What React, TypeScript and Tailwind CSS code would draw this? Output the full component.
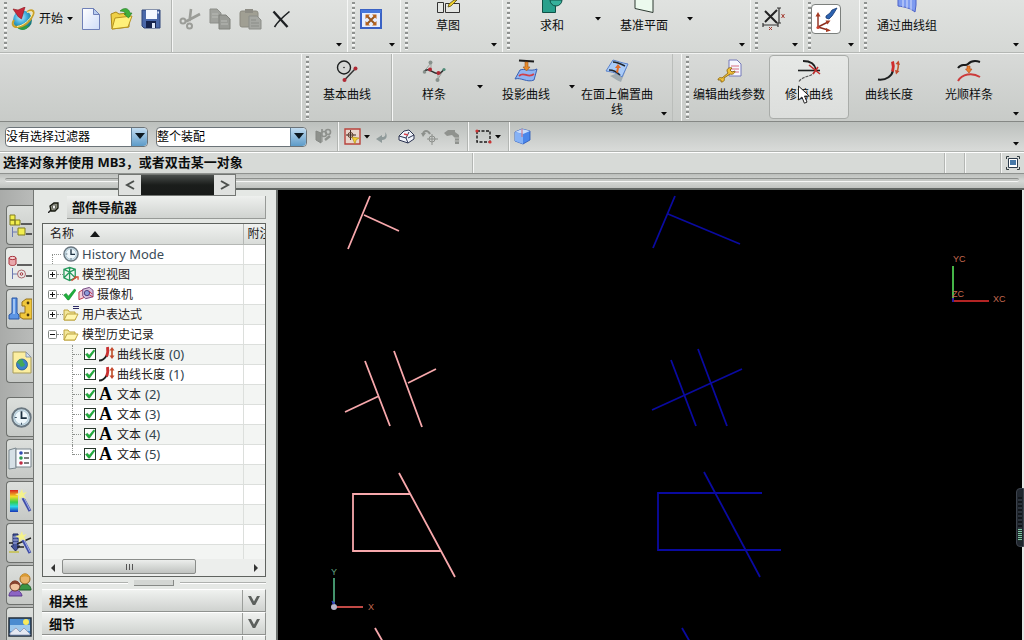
import React from "react";

type Kids = { children?: React.ReactNode };

function Caret() {
  return (
    <svg width="6" height="4" viewBox="0 0 6 4" className="shrink-0" aria-hidden="true">
      <path d="M0 0h6L3 3.6z" fill="#0a0a0a" />
    </svg>
  );
}

function Overflow() {
  return (
    <button aria-label="工具条选项" className="mr-1 mb-1 ml-auto flex h-2.5 w-2 shrink-0 items-end justify-center self-end pb-px">
      <Caret />
    </button>
  );
}

function DropButton({ label }: { label: string }) {
  return (
    <button aria-label={label} className="flex h-5 w-3 shrink-0 items-center justify-center">
      <Caret />
    </button>
  );
}

function Grip() {
  return (
    <span className="my-0.5 w-[3px] shrink-0 bg-[repeating-linear-gradient(to_bottom,#8f9290_0_2px,#f4f5f4_2px_4px,transparent_4px_5px)]" />
  );
}

function Divider() {
  return <span className="w-0.5 shrink-0 border-l border-[#b3b6b3] bg-[#f6f7f6]" />;
}

function IconButton({ label, className, children }: { label: string; className?: string } & Kids) {
  return (
    <button aria-label={label} className={"flex shrink-0 items-center justify-center " + (className ?? "")}>
      {children}
    </button>
  );
}

function TopItem({ label, children }: { label: string } & Kids) {
  return (
    <button className="flex w-20 shrink-0 flex-col items-center text-xs leading-4">
      <span className="mb-1 flex h-3.5 items-start">{children}</span>
      {label}
    </button>
  );
}

function CurveItem({ label, active, children }: { label: string; active?: boolean } & Kids) {
  return (
    <button
      className={
        "relative flex h-16 w-20 flex-col items-center rounded-sm border px-px pt-[3px] text-xs leading-[15px] " +
        (active ? "border-[#a9aca9] bg-linear-to-b from-[#e6e8e6] to-[#dcdedc]" : "border-transparent")
      }
    >
      <span className="mb-1 flex h-6 items-center">{children}</span>
      {label}
      {active && <Pointer />}
    </button>
  );
}

function Pointer() {
  return (
    <svg width="14" height="20" viewBox="0 0 14 20" className="absolute top-[29px] left-[27px]" aria-hidden="true">
      <path d="M1.5 1v14l3.4-3 2.5 6.2 2.6-1.1-2.5-6h4.8z" fill="#fff" stroke="#222" strokeWidth="1" />
    </svg>
  );
}

/* ---------- standard toolbar icons ---------- */

function StartIcon() {
  return (
    <svg width="24" height="24" viewBox="0 0 24 24" aria-hidden="true">
      <defs>
        <radialGradient id="globe" cx=".4" cy=".35" r=".7">
          <stop offset="0" stopColor="#bdf1ff" />
          <stop offset=".5" stopColor="#3aa7d8" />
          <stop offset="1" stopColor="#0d6a62" />
        </radialGradient>
      </defs>
      <circle cx="11.5" cy="13" r="9.500" fill="url(#globe)" />
      <path d="M6 20c3 4 9 4 12-1-3 1-5-3-9-1z" fill="#2f9a44" />
      <path d="M16 5c4-3 8-2 6 3-2 6-9 12-16 12-5 0-5-4-3-7" fill="none" stroke="#c9a02a" strokeWidth="2" />
      <path d="M16 5.500c4-2 6-1 5 2-2 5-8 11-15 12" fill="none" stroke="#fff3a6" strokeWidth="1" />
      <path d="M2 2l5 1 7-3-3.500 12-3-2z" fill="#c8283a" stroke="#8c1219" strokeWidth=".6" />
    </svg>
  );
}

function NewIcon() {
  return (
    <svg width="20" height="24" viewBox="0 0 20 24" aria-hidden="true">
      <defs>
        <linearGradient id="sheet" x2="1" y2="1">
          <stop offset="0" stopColor="#fff" />
          <stop offset="1" stopColor="#cfdcf8" />
        </linearGradient>
      </defs>
      <path d="M1.500 1.500h11l6 6v15h-17z" fill="url(#sheet)" stroke="#6f80b8" />
      <path d="M12.500 1.500v6h6z" fill="#b9cdf0" stroke="#6f80b8" />
    </svg>
  );
}

function OpenIcon() {
  return (
    <svg width="24" height="24" viewBox="0 0 24 24" aria-hidden="true">
      <path d="M2 7l5-2 3 2 10-1v14L3 22z" fill="#efd046" stroke="#a8861a" />
      <path d="M6 11l17-2-4 11L3 22z" fill="#fff07a" stroke="#b8941f" />
      <path d="M11 4c4-4 9-3 10 2h2l-3.500 5-4.500-4h2c-1-2-3-3-6-3z" fill="#3fae3b" stroke="#227a25" strokeWidth=".6" />
    </svg>
  );
}

function SaveIcon() {
  return (
    <svg width="20" height="20" viewBox="0 0 20 20" aria-hidden="true">
      <path d="M1 1h18v18H3l-2-2z" fill="#4a68a8" stroke="#2f4578" />
      <path d="M5 1h11v9H5z" fill="#f4f8ff" />
      <path d="M16.500 2.500h1.500v2h-1.500z" fill="#dfe8f8" />
      <path d="M5 12h10v7H5z" fill="#16244c" />
      <path d="M11 14h3v5h-3z" fill="#dfe8f8" />
    </svg>
  );
}

function CutIcon() {
  return (
    <svg width="22" height="22" viewBox="0 0 22 22" fill="none" stroke="#9b9d98" strokeWidth="2" aria-hidden="true">
      <path d="M12 1l-1.500 12M21 6L7 13.500" strokeWidth="2.600" />
      <circle cx="4" cy="13" r="2.500" />
      <circle cx="10.500" cy="18" r="2.500" />
    </svg>
  );
}

function CopyIcon() {
  return (
    <svg width="22" height="22" viewBox="0 0 22 22" aria-hidden="true">
      <path d="M1 1h7l4 4v10H1z" fill="#a0a29d" stroke="#8d8f8a" />
      <path d="M10 7h7l4 4v10H10z" fill="#999b96" stroke="#80827d" />
      <path d="M3 6h6M3 9h6M12 13h6M12 16h7" stroke="#b9bbb6" />
    </svg>
  );
}

function PasteIcon() {
  return (
    <svg width="23" height="22" viewBox="0 0 23 22" aria-hidden="true">
      <rect x="1" y="3" width="18" height="16" rx="2" fill="#a09f93" stroke="#8b8a80" />
      <path d="M6 1h8v4H6z" fill="#8d8c84" />
      <path d="M10 8h8l4 4v9H10z" fill="#a5a7a2" stroke="#8b8d88" />
      <path d="M12 12h5M12 15h8M12 18h8" stroke="#8b8d88" />
    </svg>
  );
}

function DeleteIcon() {
  return (
    <svg width="20" height="18" viewBox="0 0 20 18" aria-hidden="true">
      <path d="M1.500 1.500L15.500 17" stroke="#1d2022" strokeWidth="2.400" />
      <path d="M17.500 1.500C12 6 6 11 2.500 17" fill="none" stroke="#1d2022" strokeWidth="1.600" />
    </svg>
  );
}

function FitIcon() {
  return (
    <svg width="22" height="20" viewBox="0 0 22 20" aria-hidden="true">
      <rect x="1" y="1" width="20" height="18" fill="#e8f0ff" stroke="#3a62c4" strokeWidth="2" />
      <path d="M1 1h20v3H1z" fill="#4678dc" />
      <path d="M7 7l8 8M15 7l-8 8" stroke="#9a5a20" strokeWidth="2" />
      <path d="M5.500 5.500h4.500l-4.500 4.500zM16.500 5.500h-4.500l4.500 4.500zM5.500 16.500h4.500l-4.500-4.500zM16.500 16.500h-4.500l4.500-4.500z" fill="#b8641c" />
    </svg>
  );
}

function SketchIcon() {
  return (
    <svg width="23" height="13" viewBox="0 0 23 13" aria-hidden="true">
      <path d="M.5 2.500h6v10h-6zM8.500 3.500h14v9h-14z" fill="#e4e6e3" stroke="#333" />
      <path d="M17 0l-5 4-1 3 3-1 6-6z" fill="#f0d22c" stroke="#574a10" strokeWidth=".8" />
    </svg>
  );
}

function UniteIcon() {
  return (
    <svg width="22" height="13" viewBox="0 0 22 13" aria-hidden="true">
      <path d="M1.500-1h13v13.500h-13z" fill="#28a08c" stroke="#0f5146" />
      <path d="M9 0a6 6 0 0 0 12 0z" fill="#35b09b" stroke="#0f5146" />
    </svg>
  );
}

function PlaneIcon() {
  return (
    <svg width="20" height="13" viewBox="0 0 20 13" aria-hidden="true">
      <path d="M1-1v9.500l18 4V-1z" fill="#ecfaee" stroke="#2e3a33" />
    </svg>
  );
}

function DimensionIcon() {
  return (
    <svg width="24" height="24" viewBox="0 0 24 24" fill="none" aria-hidden="true">
      <path d="M3 4l12 12M15 3L3 15" stroke="#222" strokeWidth="2" />
      <path d="M15 1h4M15 16h4M17 1v15M1 16v4M16 16v4M1 18h15" stroke="#333" strokeWidth="1.200" />
      <path d="M19.500 7l3 4m0-4l-3 4M7 20l3 3m0-3l-3 3" stroke="#a33c32" />
    </svg>
  );
}

function WcsIcon() {
  return (
    <svg width="26" height="26" viewBox="0 0 26 26" aria-hidden="true">
      <path d="M5 21V8M5 21l10-5M5 21l10 3" stroke="#8c2c1c" strokeWidth="1.400" />
      <path d="M2.500 10.500L5 6l2.500 4.500zM12.500 14.500l5 0-3 4zM13 22l5 2.500-5 1.500z" fill="#a63a22" />
      <circle cx="5" cy="21.500" r="1.600" fill="#c43" />
      <path d="M13 10l4-3 2-3 5-2-3 5-2 3-3 3-3-1z" fill="#2c62b0" stroke="#163a74" strokeWidth=".8" />
    </svg>
  );
}

function ThroughIcon() {
  return (
    <svg width="21" height="13" viewBox="0 0 21 13" aria-hidden="true">
      <path d="M1-1v7c7 1 12 2 17 6l1-7V-1z" fill="#7e9bf0" stroke="#4c62c8" />
      <path d="M6-1v8M10-1v9M14-1v11" stroke="#d5defc" />
    </svg>
  );
}

/* ---------- curve toolbar icons ---------- */

function BasicCurveIcon() {
  return (
    <svg width="22" height="24" viewBox="0 0 22 24" aria-hidden="true">
      <circle cx="8" cy="8.500" r="6.500" fill="none" stroke="#1c1f1f" strokeWidth="1.400" />
      <circle cx="8" cy="8.500" r=".8" fill="#222" />
      <path d="M8.500 21L19.500 9.500" stroke="#333" strokeWidth="1.500" />
      <circle cx="8.500" cy="21" r="2" fill="#b02a35" />
      <circle cx="19.500" cy="9.500" r="2" fill="#b02a35" />
    </svg>
  );
}

function SplineIcon() {
  return (
    <svg width="24" height="24" viewBox="0 0 24 24" fill="none" aria-hidden="true">
      <path d="M2 12.500L9 4l0 6M16 14l0 6 6-10" stroke="#9aa19c" />
      <path d="M2 12.500c5-5 8 2 14 2 3 0 4-2 6-4" stroke="#2d3030" strokeWidth="1.500" />
      <circle cx="8.500" cy="3.500" r="2" fill="#88918c" />
      <circle cx="2.500" cy="13" r="1.800" fill="#88918c" />
      <circle cx="15.500" cy="21" r="2" fill="#88918c" />
      <circle cx="22" cy="10.500" r="1.600" fill="#4f8c78" />
      <circle cx="8" cy="10.500" r="2" fill="#b02a35" />
      <circle cx="16.500" cy="14" r="2" fill="#b02a35" />
    </svg>
  );
}

function ProjectIcon() {
  return (
    <svg width="24" height="24" viewBox="0 0 24 24" aria-hidden="true">
      <path d="M1 20l5-9c5-2 10 2 17-1l-3 11c-7 3-13-3-19-1z" fill="#8fb4f2" stroke="#3861b4" />
      <path d="M5 17c5-5 9 3 15-2" fill="none" stroke="#d0404a" strokeWidth="1.800" />
      <path d="M5 1.500l15 1" stroke="#1b1b1b" strokeWidth="2" />
      <path d="M11 3h3v5h2l-3.500 4L9 8h2z" fill="#e58a2b" stroke="#a3541a" strokeWidth=".6" />
    </svg>
  );
}

function OffsetFaceIcon() {
  return (
    <svg width="24" height="24" viewBox="0 0 24 24" aria-hidden="true">
      <path d="M5 17l10-4 7-5-6 15c-4-1-8-5-11-6z" fill="#8b9aa2" opacity=".7" />
      <path d="M1 12L8 1c4 1 9 3 15 4l-6 13c-4-4-10-5-16-6z" fill="#a9cbf8" stroke="#5b83cc" />
      <path d="M8 3c4 0 8 2 12 4M4 11c5 0 8 2 11 5" fill="none" stroke="#20262c" strokeWidth="1.600" />
      <path d="M13 5l3 4h-2l-1 5-2-1 1-4h-2z" fill="#e06e2b" />
    </svg>
  );
}

function EditParamsIcon() {
  return (
    <svg width="25" height="24" viewBox="0 0 25 24" aria-hidden="true">
      <path d="M12 1h8l4 4v12H12z" fill="#f6f7ff" stroke="#7478b8" />
      <path d="M14 7h8M14 10h8M14 13h8" stroke="#d96d82" />
      <path d="M15 9c-2-1-5 0-5 3l1 2-6 5c-2-1-4 0-4 2h3v2c3 0 4-2 3-4l6-4c3 1 5-1 5-3l-3 1-2-2z" fill="#f2c239" stroke="#8c6915" strokeWidth=".9" />
    </svg>
  );
}

function TrimIcon() {
  return (
    <svg width="24" height="24" viewBox="0 0 24 24" fill="none" aria-hidden="true">
      <path d="M6 2c8 0 12 3 13 9" stroke="#1d1f1f" strokeWidth="1.800" />
      <path d="M1 11.500h22" stroke="#1d1f1f" strokeWidth="1.600" />
      <path d="M2 22.500c4-6 12-4 16-10" stroke="#555" strokeWidth="1.200" strokeDasharray="3 1" />
      <path d="M12 6l11 9M21 8l-5 7" stroke="#c32f2f" strokeWidth="1.600" />
    </svg>
  );
}

function LengthIcon() {
  return (
    <svg width="24" height="24" viewBox="0 0 24 24" fill="none" aria-hidden="true">
      <path d="M1 20.500c9 1 14-4 15-9" stroke="#1d1f1f" strokeWidth="2" />
      <path d="M15.500 12.500c1-3 1-7 0-10" stroke="#d02c2c" strokeWidth="3" />
      <path d="M21 4c1 3 0 6-1 9" stroke="#c05c30" strokeWidth="1.600" />
      <path d="M18.500 5l3-3.500 1.500 4.500zM18 11l4.500 1-3.500 3.500z" fill="#c44a2c" />
    </svg>
  );
}

function LengthFeatureIcon() {
  return (
    <svg width="16" height="16" viewBox="0 0 16 16" fill="none" aria-hidden="true">
      <path d="M0 14.500c4 0 6-2 7.500-5" stroke="#1d1f1f" strokeWidth="1.800" />
      <path d="M7.500 10.500C9 7.500 9 4 8.500 1" stroke="#c93030" strokeWidth="2.800" />
      <path d="M13 3v8" stroke="#c2603c" strokeWidth="1.800" />
      <path d="M10.500 4.500L13 1l2.500 3.500zM10.500 9.500h5L13 13z" fill="#c2482c" />
    </svg>
  );
}

function SmoothIcon() {
  return (
    <svg width="24" height="24" viewBox="0 0 24 24" fill="none" aria-hidden="true">
      <path d="M1 9c4-6 7-1 10-4s6-4 12-2" stroke="#181a1a" strokeWidth="2" />
      <path d="M1 22C5 15 15 13 23 18" stroke="#cc3b3b" strokeWidth="2" />
      <path d="M10 7h3v3h2l-3 4-3.500-4H10z" fill="#e77f2d" stroke="#b0471d" strokeWidth=".6" />
    </svg>
  );
}

/* ---------- selection bar icons ---------- */

function LinkGrayIcon() {
  return (
    <svg width="17" height="17" viewBox="0 0 17 17" fill="none" aria-hidden="true">
      <path d="M1 3l5 2v10l-5-3zM7 4V1v13" fill="#8e918d" stroke="#858884" />
      <circle cx="9" cy="6" r="2.500" stroke="#8e918d" strokeWidth="1.600" />
      <circle cx="13" cy="4" r="2.500" stroke="#8e918d" strokeWidth="1.600" />
      <path d="M10 12l5-4" stroke="#8e918d" strokeWidth="2.500" />
    </svg>
  );
}

function SnapIcon() {
  return (
    <svg width="17" height="17" viewBox="0 0 17 17" fill="none" aria-hidden="true">
      <path d="M1 1h15v15H1z" fill="#e8d6cc" stroke="#b8433c" strokeWidth="1.400" />
      <path d="M6.500 2v10M2 7h10" stroke="#3d2c24" />
      <circle cx="6.500" cy="7" r="2.500" stroke="#5d3a2a" />
      <path d="M8 9l7 1-3 2-1 4z" fill="#f0d032" stroke="#a98418" strokeWidth=".6" />
    </svg>
  );
}

function BackGrayIcon() {
  return (
    <svg width="13" height="12" viewBox="0 0 13 12" aria-hidden="true">
      <path d="M10 1c3 3 2 8-3 8v3L1 8l6-4v2c3 0 4-2 3-5z" fill="#8f9a9a" />
    </svg>
  );
}

function BodyIcon() {
  return (
    <svg width="17" height="15" viewBox="0 0 17 15" aria-hidden="true">
      <path d="M1 7l5-5 5-1 5 5v4l-6 4-9-3z" fill="#f0f3fa" stroke="#2b3350" />
      <path d="M1 7l7 2 3-6M8 9l2 5M11 1l5 5-6 3" fill="none" stroke="#2b3350" />
      <path d="M6 5l4 1" stroke="#d8414a" strokeWidth="1.600" />
    </svg>
  );
}

function SpinGrayIcon() {
  return (
    <svg width="17" height="16" viewBox="0 0 17 16" fill="none" stroke="#8d908c" aria-hidden="true">
      <path d="M2 5c1-4 5-4 7 0" strokeWidth="2" />
      <path d="M0 4l5 0-3 4z" fill="#8d908c" stroke="none" />
      <circle cx="11" cy="10" r="3" />
      <path d="M11 5v11M6 10h11" />
    </svg>
  );
}

function HammerGrayIcon() {
  return (
    <svg width="17" height="16" viewBox="0 0 17 16" aria-hidden="true">
      <path d="M0 4l4-3 7 0v2l4 3v9h-4v-6l-3-3-5 1z" fill="#8f928e" />
      <path d="M10 9h6M10 12h6" stroke="#c0c2bf" />
    </svg>
  );
}

function LassoIcon() {
  return (
    <svg width="17" height="16" viewBox="0 0 17 16" fill="none" aria-hidden="true">
      <path d="M2 2h13v11H2z" stroke="#1a1a1a" strokeWidth="1.400" strokeDasharray="3 1.500" />
      <circle cx="2" cy="2" r="1.600" fill="#c33" />
      <circle cx="15" cy="13" r="1.600" fill="#c33" />
    </svg>
  );
}

function CubeIcon() {
  return (
    <svg width="17" height="17" viewBox="0 0 17 17" aria-hidden="true">
      <path d="M1 4l7-3 8 2v9l-7 4-8-3z" fill="#4a86ea" stroke="#2755b8" strokeWidth=".8" />
      <path d="M1 4l7-3 8 2-7 3z" fill="#c9ddfb" />
      <path d="M1 4l8 2v10l-8-3z" fill="#86b2f6" />
      <path d="M8 1v8" stroke="#d06a78" />
    </svg>
  );
}

function FullscreenIcon() {
  return (
    <svg width="14" height="14" viewBox="0 0 14 14" fill="none" aria-hidden="true">
      <path d="M.500 3V.500H3M11 .500h2.500V3M13.500 11v2.500H11M3 13.500H.500V11" stroke="#333c40" />
      <path d="M2.500 2.500h9v9h-9z" fill="#fff" stroke="#2c3c4c" />
      <path d="M4 4h6v5H4z" fill="#4678a8" />
    </svg>
  );
}

/* ---------- tree icons ---------- */

function ClockIcon({ size = 16 }: { size?: number }) {
  return (
    <svg width={size} height={size} viewBox="0 0 20 20" aria-hidden="true">
      <circle cx="10" cy="10" r="8.800" fill="#cfe4ee" stroke="#6a7780" strokeWidth="1.800" />
      <circle cx="10" cy="10" r="6.600" fill="#eef7fb" stroke="#9fb8c6" strokeWidth=".8" />
      <path d="M10 4v6.500h5" fill="none" stroke="#1c3040" strokeWidth="1.700" />
      <path d="M10 15v2M3.500 10h2" stroke="#44586a" />
    </svg>
  );
}

function ModelViewIcon() {
  return (
    <svg width="16" height="16" viewBox="0 0 17 16" fill="none" aria-hidden="true">
      <path d="M1 3l6-2 6 2v9l-6 3-6-3zM1 3l6 3 6-3M7 6v9M7 1v5l-6 6M7 6l6 6" stroke="#259a5c" strokeWidth="1.400" />
      <path d="M9 15l6-4M12 11h4v3" stroke="#d24a30" strokeWidth="1.400" />
    </svg>
  );
}

function CheckIcon({ size = 12 }: { size?: number }) {
  return (
    <svg width={size} height={size} viewBox="0 0 12 12" aria-hidden="true">
      <path d="M.500 6.500L3 5l2 2.500L10.500 1 12 2 5.500 11H4.300z" fill="#1fb03c" stroke="#14802a" strokeWidth=".5" />
    </svg>
  );
}

function CameraIcon() {
  return (
    <svg width="16" height="16" viewBox="0 0 17 16" fill="none" aria-hidden="true">
      <path d="M1 6l5-3v9l-5 2z" fill="#f3d0d8" stroke="#c03048" />
      <path d="M5 3l7-2 4 3v7l-8 2-3-3z" fill="#d7c0dc" stroke="#71447e" />
      <circle cx="9.500" cy="7" r="2.800" fill="#8c9cd8" stroke="#483a78" />
      <path d="M12 5l3 3M12 9l4 2" stroke="#c03048" />
    </svg>
  );
}

function FolderIcon({ marked }: { marked?: boolean }) {
  return (
    <svg width="16" height="16" viewBox="0 0 16 16" aria-hidden="true">
      <path d="M1 14V4h4l1.500 2H12v8z" fill="#f3e79a" stroke="#bda33e" />
      <path d="M1 14l3-6h11l-3 6z" fill="#fff6ae" stroke="#bda33e" />
      {marked && <path d="M10 .500h6M10 2.500h6" stroke="#2d2a66" />}
    </svg>
  );
}

function Toggle({ open, name }: { open?: boolean; name: string }) {
  return (
    <button aria-label={name} aria-expanded={!!open} className="size-[9px] shrink-0 bg-white">
      <svg width="9" height="9" viewBox="0 0 9 9" aria-hidden="true">
        <rect x=".500" y=".500" width="8" height="8" rx="1" fill="#fff" stroke="#858a86" />
        <path d={open ? "M2 4.500h5" : "M2 4.500h5M4.500 2v5"} stroke="#111" />
      </svg>
    </button>
  );
}

function Dots() {
  return <span className="w-1.5 shrink-0 border-t border-dotted border-[#8d918d]" />;
}

type Row = {
  name: string;
  suffix?: string;
  kind: "clock" | "view" | "camera" | "expr" | "folder" | "length" | "text";
};

const rows: Row[] = [
  { name: "History Mode", kind: "clock" },
  { name: "模型视图", kind: "view" },
  { name: "摄像机", kind: "camera" },
  { name: "用户表达式", kind: "expr" },
  { name: "模型历史记录", kind: "folder" },
  { name: "曲线长度", suffix: "(0)", kind: "length" },
  { name: "曲线长度", suffix: "(1)", kind: "length" },
  { name: "文本", suffix: "(2)", kind: "text" },
  { name: "文本", suffix: "(3)", kind: "text" },
  { name: "文本", suffix: "(4)", kind: "text" },
  { name: "文本", suffix: "(5)", kind: "text" },
];

const blankRows = [0, 1, 2, 3, 4];

function Feature({ row, last }: { row: Row; last: boolean }) {
  return (
    <label className="flex h-[19px] items-center pl-[29px]">
      <span className={"self-start border-l border-dotted border-[#8d918d] " + (last ? "h-2.5" : "h-5")} />
      <span className="mr-[3px] w-2 border-t border-dotted border-[#8d918d]" />
      <span className="grid size-3 shrink-0 place-items-center">
        <input
          type="checkbox"
          defaultChecked
          className="peer col-start-1 row-start-1 size-3 appearance-none border border-[#26382b] bg-white"
        />
        <span className="pointer-events-none invisible col-start-1 row-start-1 peer-checked:visible">
          <CheckIcon size={10} />
        </span>
      </span>
      {row.kind === "length" ? (
        <span className="ml-[3px] flex w-[18px]">
          <LengthFeatureIcon />
        </span>
      ) : (
        <span className="ml-[3px] w-[18px] font-['Liberation_Serif',serif] text-lg leading-4 font-bold text-black">A</span>
      )}
      <span>{row.name}</span>
      <span className="ml-1 text-[13px] text-[#31444f]">{row.suffix}</span>
    </label>
  );
}

function Branch({ row }: { row: Row }) {
  return (
    <div className="flex h-[19px] items-center pl-[5px]">
      {row.kind === "clock" ? (
        <span className="mr-0.5 ml-1 h-2.5 w-[9px] self-end border-t border-l border-dotted border-[#8d918d]" />
      ) : (
        <>
          <Toggle name={row.name} open={row.kind === "folder"} />
          <Dots />
        </>
      )}
      <span className="mr-[3px] flex shrink-0 items-center">
        {row.kind === "clock" && <ClockIcon />}
        {row.kind === "view" && <ModelViewIcon />}
        {row.kind === "camera" && (
          <>
            <span className="mr-0.5">
              <CheckIcon size={13} />
            </span>
            <CameraIcon />
          </>
        )}
        {row.kind === "expr" && <FolderIcon marked />}
        {row.kind === "folder" && <FolderIcon />}
      </span>
      <span className={row.kind === "clock" ? "text-[13px] text-[#3b4c58]" : ""}>{row.name}</span>
    </div>
  );
}

/* ---------- resource bar ---------- */

function AssemblyIcon() {
  return (
    <svg width="24" height="24" viewBox="0 0 24 24" aria-hidden="true">
      <path d="M2 2h5v5H2zM2 7h5v5H2zM7 7h5v5H7zM10 15h7v7h-7z" fill="#f2ee4e" stroke="#807c20" />
      <path d="M13 11h11M18 21h6" stroke="#333" strokeWidth="1.400" />
      <path d="M4.500 14v10M5 19h4" stroke="#6c7ab0" />
    </svg>
  );
}

function PartIcon() {
  return (
    <svg width="24" height="24" viewBox="0 0 24 24" fill="none" aria-hidden="true">
      <path d="M1 3v6c1 2 6 2 7 0V3z" fill="#e8a8ac" stroke="#a8323c" />
      <ellipse cx="4.500" cy="3" rx="3.500" ry="1.600" fill="#f6d4d6" stroke="#a8323c" />
      <path d="M9 10h15M18 21h6" stroke="#333" strokeWidth="1.400" />
      <path d="M4.500 13v11M5 19h4" stroke="#6c7ab0" />
      <circle cx="13.500" cy="19" r="4" stroke="#a8666c" />
      <circle cx="13.500" cy="19" r="1.300" stroke="#a8323c" />
    </svg>
  );
}

function ReuseIcon() {
  return (
    <svg width="24" height="24" viewBox="0 0 24 24" aria-hidden="true">
      <path d="M4 1h5v15l2 2v4H1v-4l3-2z" fill="#5b94e4" stroke="#2b56a4" />
      <path d="M6 2v15" stroke="#b8d4fa" strokeWidth="1.500" />
      <path d="M14 5l4-3h6v20h-9l-3-2v-4h5V9h-3z" fill="#f0c83c" stroke="#94701a" />
      <circle cx="20" cy="6" r="1.400" fill="#4c3a10" />
      <circle cx="20" cy="18" r="1.400" fill="#4c3a10" />
    </svg>
  );
}

function WebIcon() {
  return (
    <svg width="20" height="24" viewBox="0 0 20 24" aria-hidden="true">
      <path d="M1 1h13l5 5v16H1z" fill="#fbeea0" stroke="#a99c58" />
      <path d="M14 1v5h5z" fill="#d2dff4" stroke="#8a97a8" />
      <circle cx="10" cy="13.500" r="5.500" fill="#3a82cc" stroke="#1d4e80" strokeWidth=".7" />
      <path d="M8 8c5 1 2 4 5 5 0 2-3 4-5 2 0-3-3-2-3-4z" fill="#43a858" />
    </svg>
  );
}

function RoleListIcon() {
  return (
    <svg width="24" height="24" viewBox="0 0 24 24" aria-hidden="true">
      <path d="M1 3l7-2v20l-7 1z" fill="#d6e0e6" stroke="#78858c" />
      <path d="M8 2h15v18H8z" fill="#fafcff" stroke="#78858c" />
      <circle cx="13" cy="6" r="1.800" fill="#3048b0" />
      <circle cx="13" cy="11" r="1.800" fill="#2c9850" />
      <circle cx="13" cy="16" r="1.800" fill="#c02c44" />
      <path d="M16 6h5M16 11h5M16 16h5" stroke="#555" strokeWidth="1.400" />
    </svg>
  );
}

function Wand() {
  return (
    <>
      <path d="M15 9l7 13" stroke="#3f4da8" strokeWidth="3" />
      <path d="M16 9l6 12" stroke="#a7b4ec" />
      <path d="M14 0l1 4 4-1-3 3 2 4-4-2-3 3 0-4-4-2 5-1z" fill="#f4f28c" />
    </>
  );
}

function PaletteIcon() {
  return (
    <svg width="24" height="24" viewBox="0 0 24 24" aria-hidden="true">
      <defs>
        <linearGradient id="spectrum" x2="0" y2="1">
          <stop offset="0" stopColor="#d81e1e" />
          <stop offset=".3" stopColor="#f4dc26" />
          <stop offset=".55" stopColor="#35ce4c" />
          <stop offset=".75" stopColor="#2bd8e8" />
          <stop offset="1" stopColor="#1834b8" />
        </linearGradient>
      </defs>
      <path d="M2 1h8v22H2z" fill="url(#spectrum)" />
      <Wand />
    </svg>
  );
}

function ProcessIcon() {
  return (
    <svg width="24" height="24" viewBox="0 0 24 24" aria-hidden="true">
      <path d="M5 3h5v12h2l-4.500 5L3 15h2z" fill="#46569c" stroke="#202c60" />
      <path d="M5 6h5M5 9h5M5 12h5" stroke="#aab4e4" />
      <path d="M9 13l14-6M1 12h4M9 16h7" stroke="#222" strokeWidth="1.400" />
      <path d="M1 21h10" stroke="#c6c04a" strokeWidth="1.500" />
      <Wand />
    </svg>
  );
}

function PeopleIcon() {
  return (
    <svg width="24" height="24" viewBox="0 0 24 24" aria-hidden="true">
      <path d="M11 17c0-8 12-8 12 0z" fill="#3a9444" stroke="#1d5c26" />
      <circle cx="17" cy="6" r="5" fill="#eab46a" stroke="#91621f" />
      <path d="M12 5c1-6 9-6 10 0-3-2-7-2-10 0z" fill="#d89a34" />
      <path d="M1 23c0-8 12-8 13 0z" fill="#8c64c4" stroke="#58388a" />
      <circle cx="7" cy="13" r="5" fill="#efc4a0" stroke="#6c3a2a" />
      <path d="M2 13c0-7 10-7 10 0-3-3-7-3-10 0z" fill="#86432f" />
    </svg>
  );
}

function SceneIcon() {
  return (
    <svg width="24" height="20" viewBox="0 0 24 20" aria-hidden="true">
      <path d="M1 1h22v18H1z" fill="#4a8cd0" stroke="#222c38" strokeWidth="1.500" />
      <path d="M2 8h20v6H2z" fill="#9cc8ec" />
      <circle cx="18" cy="5" r="3" fill="#f8ea5c" />
      <path d="M2 16l6-5 4 4 4-4 6 6v1H2z" fill="#e5e8f2" stroke="#8b93ae" strokeWidth=".8" />
    </svg>
  );
}

const tabs = [
  { label: "装配导航器", icon: <AssemblyIcon /> },
  { label: "部件导航器", icon: <PartIcon />, active: true },
  { label: "重用库", icon: <ReuseIcon /> },
  { label: "浏览器", icon: <WebIcon />, apart: true },
  { label: "历史记录", icon: <ClockIcon size={21} />, apart: true },
  { label: "系统材料", icon: <RoleListIcon /> },
  { label: "可视化", icon: <PaletteIcon /> },
  { label: "加工向导", icon: <ProcessIcon /> },
  { label: "角色", icon: <PeopleIcon /> },
  { label: "系统场景", icon: <SceneIcon /> },
];

function ResourceBar() {
  return (
    <nav className="flex w-[33px] shrink-0 flex-col items-end overflow-hidden bg-linear-to-r from-[#a9aba9] to-[#b9bbb9] pt-[15px]">
      {tabs.map((t) => (
        <button
          key={t.label}
          aria-label={t.label}
          className={
            "mb-0.5 flex h-10 shrink-0 items-center justify-end rounded-l border border-r-0 border-[#6d706d] " +
            (t.apart ? "mt-3 " : "") +
            (t.active ? "w-7 bg-[#e8ebe8] pr-px" : "w-[27px] bg-linear-to-b from-[#dcdfdc] to-[#c6c9c6] pr-px")
          }
        >
          {t.icon}
        </button>
      ))}
    </nav>
  );
}

/* ---------- panels ---------- */

function Combo({ label, value, className }: { label: string; value: string; className: string }) {
  return (
    <span className={"relative flex h-5 shrink-0 " + className}>
      <select
        aria-label={label}
        className="h-full w-full appearance-none rounded-sm border border-[#6b7378] bg-white text-xs leading-4 text-black"
      >
        <option>{value}</option>
      </select>
      <span className="pointer-events-none absolute inset-y-px right-px flex w-4 items-center justify-center rounded-r-sm border-l border-[#5f7f98] bg-linear-to-b from-[#c2dcf0] to-[#5c9bc8]">
        <svg width="10" height="7" viewBox="0 0 10 7" aria-hidden="true">
          <path d="M0 0h10L5 6z" fill="#0c1820" />
        </svg>
      </span>
    </span>
  );
}

function Section({ title }: { title: string }) {
  return (
    <button className="flex h-[23px] w-full shrink-0 items-stretch border-t border-r border-b border-t-white border-r-[#8f928f] border-b-[#8f928f] bg-linear-to-b from-[#f0f2f0] to-[#cfd2cf] text-left text-[13px] font-bold">
      <span className="flex flex-1 items-center pl-[7px] leading-5">{title}</span>
      <span className="flex w-[23px] items-center justify-center border-l border-[#9b9e9b]">
        <svg width="12" height="9" viewBox="0 0 12 9" aria-hidden="true">
          <path d="M0 0h3L6 5.500 9 0h3L7.200 9H4.800z" fill="#5c605d" />
        </svg>
      </span>
    </button>
  );
}

function Navigator() {
  return (
    <aside className="flex w-[245px] shrink-0 flex-col overflow-hidden border-r-2 border-l border-r-[#6c706d] border-l-[#737673] bg-[#e5e8e5] pt-1.5 pr-2.5 pl-2">
      <header className="mb-1 flex h-[23px] shrink-0 items-stretch">
        <button aria-label="固定" className="flex w-[25px] items-center pl-1.5">
          <svg width="11" height="11" viewBox="0 0 11 11" aria-hidden="true">
            <path d="M0 11l4-4" stroke="#222" strokeWidth="1.400" />
            <path d="M2 4l4-3h4v5L7 9H3z" fill="#8f9280" stroke="#16180f" strokeWidth="1.300" />
            <ellipse cx="6" cy="5" rx="1.600" ry="2.200" fill="#f3f4ee" stroke="#333" strokeWidth=".7" />
          </svg>
        </button>
        <h2 className="flex flex-1 items-center border-r border-b border-[#979a97] bg-linear-to-b from-[#eef0ee] to-[#d0d3d0] pl-[5px] text-[13px] leading-5 font-bold">
          部件导航器
        </h2>
      </header>

      <div className="flex h-[354px] shrink-0 flex-col border border-[#5f635f] bg-white">
        <div className="flex-1 overflow-hidden">
          <table className="w-full table-fixed border-collapse text-xs leading-[19px] text-[#1d2020]">
            <thead>
              <tr className="h-5 bg-linear-to-b from-[#f0f2f0] to-[#d9dcd9]">
                <th className="border-r border-b border-[#b4b7b4] p-0 pl-[7px] text-left font-normal">
                  <span className="flex items-center gap-4">
                    名称
                    <svg width="10" height="6" viewBox="0 0 10 6" aria-hidden="true">
                      <path d="M5 0l5 6H0z" fill="#151818" />
                    </svg>
                  </span>
                </th>
                <th className="w-[22px] overflow-hidden border-b border-[#b4b7b4] p-0 pl-1 text-left font-normal text-clip whitespace-nowrap">
                  附注
                </th>
              </tr>
            </thead>
            <tbody>
              {rows.map((r, i) => (
                <tr key={r.name + (r.suffix ?? "")} className="h-5 even:bg-[#f3f5f3]">
                  <td className="border-r border-b border-[#dcdfdc] p-0 whitespace-nowrap">
                    {r.suffix ? <Feature row={r} last={i === rows.length - 1} /> : <Branch row={r} />}
                  </td>
                  <td className="border-b border-[#dcdfdc] p-0" />
                </tr>
              ))}
              {blankRows.map((n) => (
                <tr key={n} className="h-5 even:bg-[#f3f5f3]">
                  <td className="border-r border-b border-[#dcdfdc] p-0" />
                  <td className="border-b border-[#dcdfdc] p-0" />
                </tr>
              ))}
            </tbody>
          </table>
        </div>
        <div className="flex h-[17px] shrink-0 items-stretch bg-[#eceeec]">
          <button aria-label="向左滚动" className="flex w-[19px] items-center justify-center">
            <svg width="4" height="8" viewBox="0 0 4 8" aria-hidden="true">
              <path d="M4 0v8L0 4z" fill="#333" />
            </svg>
          </button>
          <div className="flex-1">
            <div className="flex h-[15px] w-[134px] items-center justify-center gap-0.5 rounded-xs border border-[#8a8d8a] bg-linear-to-b from-[#eceeec] to-[#c0c3c0]">
              <span className="h-1.5 w-px bg-[#555]" />
              <span className="h-1.5 w-px bg-[#555]" />
              <span className="h-1.5 w-px bg-[#555]" />
            </div>
          </div>
          <button aria-label="向右滚动" className="flex w-[19px] items-center justify-center">
            <svg width="4" height="8" viewBox="0 0 4 8" aria-hidden="true">
              <path d="M0 0v8l4-4z" fill="#333" />
            </svg>
          </button>
        </div>
      </div>

      <div className="flex h-3 shrink-0 items-center gap-1.5">
        <span className="h-0.5 flex-1 border-t border-[#aeb1ae] bg-white" />
        <span className="h-1.5 w-10 border-r border-b border-[#868986] bg-[#d3d6d3]" />
        <span className="h-0.5 flex-1 border-t border-[#aeb1ae] bg-white" />
      </div>
      <Section title="相关性" />
      <Section title="细节" />
      <Section title="" />
    </aside>
  );
}

function GraphicsView() {
  return (
    <main className="relative min-w-0 flex-1 overflow-hidden border-r-2 border-[#e4e6e4] bg-black">
      <svg className="block h-full w-full font-['Liberation_Sans',sans-serif]" role="img" aria-label="图形窗口">
        <g transform="translate(-278 -190)">
          <g fill="none" stroke="#f7a8ac" strokeWidth="1.800">
            <path d="M370 196L348 249M364 215L399 231" />
            <path d="M365 361L390 426M345 412L379 396M394 351L422 427M408 383L436 369" />
            <path d="M410 494H353V551H441M399 473L455 577" />
            <path d="M375 628L383 642" />
          </g>
          <g fill="none" stroke="#0a0aa0" strokeWidth="1.800">
            <path d="M675 196L653 248M668 214L740 244" />
            <path d="M671 360L696 426M698 349L727 426M652 410L742 369" />
            <path d="M762 493H658V550H781M704 472L760 577" />
            <path d="M682 628L690 642" />
          </g>
          <g strokeWidth="2">
            <path d="M953 266V299" stroke="#45b548" />
            <path d="M954 301H989" stroke="#b32424" />
            <path d="M953 298V302" stroke="#3020a0" />
            <path d="M334 578V604" stroke="#43936c" />
            <path d="M336 607H363" stroke="#c24a46" />
          </g>
          <circle cx="334" cy="607" r="3" fill="#b7b5c8" />
          <path d="M332 601l3 2-2 1z" fill="none" stroke="#2a35c0" />
          <g fontSize="9" fill="#c56a50">
            <text x="953" y="262">YC</text>
            <text x="952" y="297">ZC</text>
            <text x="993" y="302">XC</text>
            <text x="368" y="610">X</text>
            <text x="331" y="575" fill="#62a482">Y</text>
          </g>
        </g>
      </svg>
    </main>
  );
}

export default function App() {
  return (
    <div className="relative flex h-screen flex-col overflow-hidden bg-[#d6d9d6] font-['Noto_Sans','Noto_Sans_CJK_SC',sans-serif] text-xs text-[#0c0e0e]">
      <div className="flex h-[53px] shrink-0 items-stretch border-b border-[#b4b7b4] bg-linear-to-b from-[#e0e2e0] to-[#d5d8d5]">
        <div className="flex w-[348px] shrink-0 border-r border-[#f6f7f6] pl-1">
          <Grip />
          <div className="flex h-[38px] items-center">
            <button className="mr-2 ml-1 flex items-center">
              <StartIcon />
              <span className="mx-1 leading-4">开始</span>
              <Caret />
            </button>
            <IconButton label="新建" className="mr-2"><NewIcon /></IconButton>
            <IconButton label="打开" className="mr-2"><OpenIcon /></IconButton>
            <IconButton label="保存"><SaveIcon /></IconButton>
          </div>
          <span className="w-2.5" />
          <Divider />
          <div className="flex h-[38px] items-center gap-2 pl-1.5">
            <IconButton label="剪切"><CutIcon /></IconButton>
            <IconButton label="复制"><CopyIcon /></IconButton>
            <IconButton label="粘贴"><PasteIcon /></IconButton>
            <IconButton label="删除" className="ml-0.5"><DeleteIcon /></IconButton>
          </div>
          <Overflow />
        </div>
        <div className="flex w-[53px] shrink-0 border-r border-[#f6f7f6] pl-1">
          <Grip />
          <IconButton label="适合窗口" className="ml-[5px] h-[38px]"><FitIcon /></IconButton>
          <Overflow />
        </div>
        <div className="flex w-[102px] shrink-0 border-r border-[#f6f7f6] pl-1">
          <Grip />
          <TopItem label="草图"><SketchIcon /></TopItem>
          <Overflow />
        </div>
        <div className="flex w-[248px] shrink-0 border-r border-[#f6f7f6] pl-1">
          <Grip />
          <span className="w-0.5" />
          <TopItem label="求和"><UniteIcon /></TopItem>
          <span className="flex h-[38px] items-center"><DropButton label="求和选项" /></span>
          <TopItem label="基准平面"><PlaneIcon /></TopItem>
          <span className="flex h-[38px] items-center"><DropButton label="基准平面选项" /></span>
          <Overflow />
        </div>
        <div className="flex w-[53px] shrink-0 border-r border-[#f6f7f6] pl-1">
          <Grip />
          <IconButton label="测量距离" className="ml-1 h-[38px]"><DimensionIcon /></IconButton>
          <Overflow />
        </div>
        <div className="flex w-14 shrink-0 border-r border-[#f6f7f6] pl-1">
          <Grip />
          <IconButton label="WCS 方向" className="mt-1 h-[30px] w-[30px] rounded-sm border border-[#7c807d] bg-white"><WcsIcon /></IconButton>
          <Overflow />
        </div>
        <div className="flex flex-1 pl-1">
          <Grip />
          <TopItem label="通过曲线组"><ThroughIcon /></TopItem>
          <Overflow />
        </div>
      </div>

      <div className="flex h-[69px] shrink-0 items-stretch border-t border-b border-t-[#f2f3f2] border-b-[#858885] bg-linear-to-b from-[#d8dad8] to-[#c8cbc8]">
        <div className="ml-[301px] flex w-[372px] shrink-0 border-r border-l border-r-[#babdba] border-l-[#f6f7f6] pl-1">
          <Grip />
          <span className="flex w-[82px] pt-px pr-1.5"><CurveItem label="基本曲线"><BasicCurveIcon /></CurveItem></span>
          <Divider />
          <span className="flex pt-px pl-px"><CurveItem label="样条"><SplineIcon /></CurveItem></span>
          <span className="flex h-[66px] items-center"><DropButton label="样条选项" /></span>
          <span className="flex pt-px"><CurveItem label="投影曲线"><ProjectIcon /></CurveItem></span>
          <span className="flex h-[66px] items-center"><DropButton label="投影曲线选项" /></span>
          <span className="flex w-[78px] pt-px"><CurveItem label="在面上偏置曲线"><OffsetFaceIcon /></CurveItem></span>
          <Overflow />
        </div>
        <div className="ml-2 flex flex-1 border-l border-[#f6f7f6] pl-1">
          <Grip />
          <div className="flex pt-px">
            <CurveItem label="编辑曲线参数"><EditParamsIcon /></CurveItem>
            <CurveItem label="修剪曲线" active><TrimIcon /></CurveItem>
            <CurveItem label="曲线长度"><LengthIcon /></CurveItem>
            <CurveItem label="光顺样条"><SmoothIcon /></CurveItem>
          </div>
          <Overflow />
        </div>
      </div>

      <div className="flex h-[30px] shrink-0 items-center border-b border-[#b0b3b0] bg-linear-to-b from-[#bcc0bd] to-[#d9dbd9] pl-[5px]">
        <Combo label="类型过滤器" value="没有选择过滤器" className="mr-2 w-[143px]" />
        <Combo label="选择范围" value="整个装配" className="mr-2 w-[151px]" />
        <IconButton label="关联"><LinkGrayIcon /></IconButton>
        <span className="mx-[5px] flex self-stretch"><Divider /></span>
        <IconButton label="捕捉点"><SnapIcon /></IconButton>
        <DropButton label="捕捉点选项" />
        <IconButton label="返回" className="mr-2.5 ml-0.5"><BackGrayIcon /></IconButton>
        <IconButton label="体" className="mr-1.5"><BodyIcon /></IconButton>
        <IconButton label="旋转点" className="mr-1.5"><SpinGrayIcon /></IconButton>
        <IconButton label="路径"><HammerGrayIcon /></IconButton>
        <span className="mx-1.5 flex self-stretch"><Divider /></span>
        <IconButton label="矩形选择"><LassoIcon /></IconButton>
        <DropButton label="选择方式" />
        <span className="mx-1 flex self-stretch"><Divider /></span>
        <IconButton label="着色"><CubeIcon /></IconButton>
        <Overflow />
      </div>

      <div className="flex h-[22px] shrink-0 items-stretch border-t border-b border-t-white border-b-[#8f928f] bg-[#d7dad7]">
        <p className="w-[472px] shrink-0 pl-[3px] text-[13px] leading-[19px] font-bold">选择对象并使用 MB3，或者双击某一对象</p>
        <Divider />
        <span className="flex-1" />
        <Divider />
        <span className="w-[18px]" />
        <Divider />
        <span className="w-[34px]" />
        <Divider />
        <IconButton label="全屏显示" className="w-[22px]"><FullscreenIcon /></IconButton>
      </div>

      <div className="relative h-4 shrink-0 border-b-2 border-[#606562] bg-linear-to-b from-[#bcbfbc] via-[#d5d8d5] to-[#c0c3c0] px-[5px] pt-1">
        <div className="h-1 rounded border-t border-b border-t-[#8d908d] border-b-[#f5f6f5] bg-[#c4c7c4]" />
        <div className="absolute top-0 left-[118px] z-10 flex h-[22px] w-[118px] items-stretch border border-[#737673]">
          <button aria-label="向左" className="flex w-[22px] items-center justify-center bg-[#dfe1df]">
            <svg width="10" height="12" viewBox="0 0 10 12" fill="none" aria-hidden="true">
              <path d="M9 2L2 6l7 4" stroke="#4c504d" strokeWidth="2" />
            </svg>
          </button>
          <span className="flex-1 bg-linear-to-b from-[#4a4e4c] via-[#1a1d1b] to-[#181a19]" />
          <button aria-label="向右" className="flex w-[21px] items-center justify-center bg-[#dfe1df]">
            <svg width="10" height="12" viewBox="0 0 10 12" fill="none" aria-hidden="true">
              <path d="M1 2l7 4-7 4" stroke="#4c504d" strokeWidth="2" />
            </svg>
          </button>
        </div>
      </div>

      <div className="flex min-h-0 flex-1 items-stretch">
        <ResourceBar />
        <Navigator />
        <GraphicsView />
      </div>

      <div className="absolute right-0 bottom-[93px] flex h-[59px] w-2 flex-col justify-end rounded-l-sm border border-[#3c424c] bg-[#20262e] p-px">
        <span className="h-8 bg-[repeating-linear-gradient(to_bottom,#11151a_0_2px,#2a313a_2px_4px)]" />
        <span className="mb-1 h-3 bg-[repeating-linear-gradient(to_bottom,#7fc4a4_0_1px,#20302c_1px_2px)]" />
      </div>
    </div>
  );
}
